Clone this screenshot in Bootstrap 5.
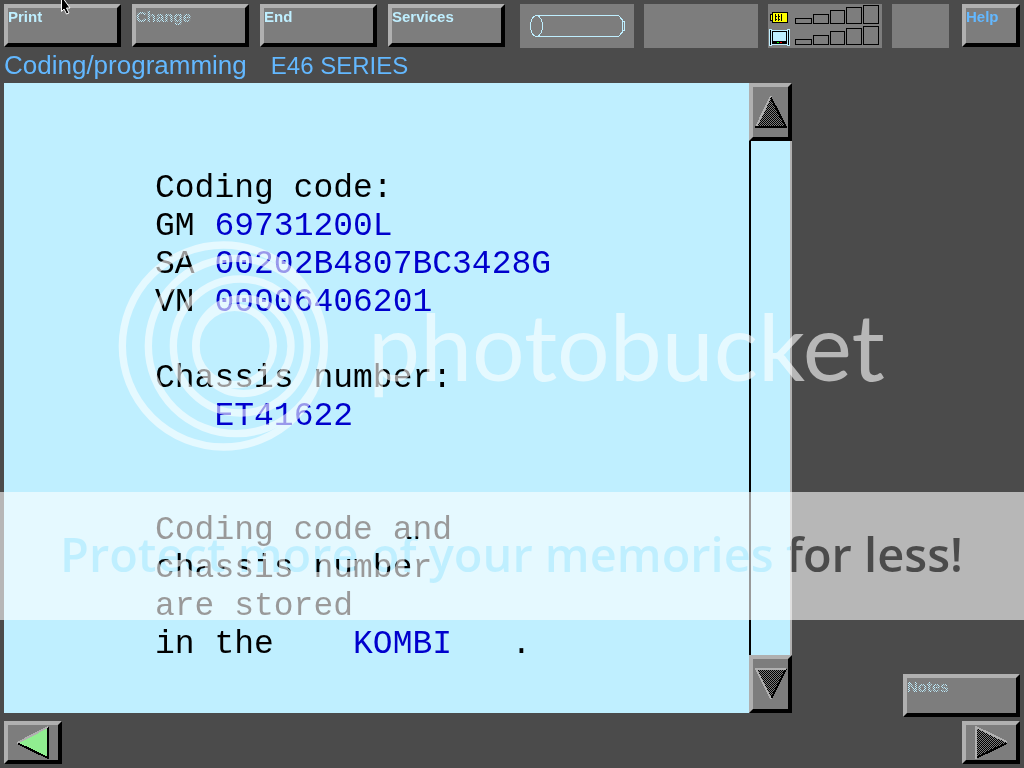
<!DOCTYPE html>
<html lang="en">
<head>
<meta charset="utf-8">
<meta name="viewport" content="width=device-width, initial-scale=1">
<title>Coding/programming</title>
<link href="https://cdn.jsdelivr.net/npm/bootstrap@5.3.0/dist/css/bootstrap.min.css" rel="stylesheet">
<style>
body { background: #4b4b4b; font-family: "Liberation Sans", Arial, sans-serif; padding: 4px; }
.toolbar { gap: 11px; height: 44px; }
.bevel {
  display: flex; align-items: flex-start;
  background: #7d7d7d; border: 4px solid; border-color: #b0b0b0 #000 #000 #b0b0b0; border-radius: 0;
  color: #bfefff; font-size: 15px; font-weight: 700; line-height: 18px; text-align: left; height: 43px; padding: 0;
}
.bevel:active { border-color: #000 #b0b0b0 #b0b0b0 #000; }
.bevel svg { display: block; }
.wide { width: 117px; }
.small-key { width: 58px; }
.help { color: #63b8ff; }
.dim { position: relative; }
.dim::after {
  content: ""; position: absolute; inset: 0;
  background: repeating-conic-gradient(#7d7d7d 0 25%, transparent 0 50%) 0 0 / 2px 2px;
}
.meters { gap: 10px; margin-left: 4px; }
.meter { background: #7d7d7d; width: 114px; }
.meter-short { width: 57px; }
.heading { color: #63b8ff; font-size: 26px; line-height: 35px; font-weight: 400; gap: 24px; }
.series { font-size: 24px; }
.work { gap: 8px; }
.screen { background: #bfefff; color: #000; }
.readout {
  font-family: "Liberation Mono", "Courier New", monospace; font-size: 33px; line-height: 38px;
  padding: 87px 0 49px 151px; white-space: pre; margin: 0; overflow: hidden; flex: 1 1 0; min-width: 0; color: #000;
}
.val { color: #0000cd; }
.scroller { width: 43px; }
.scroller .bevel { width: 43px; height: 58px; }
.track { border-left: 2px solid #000; border-right: 2px solid #b0b0b0; }
.side { width: 228px; gap: 4px; }
.mark-layer { inset: 0; padding-top: 234px; pointer-events: none; mix-blend-mode: screen; overflow: hidden; color: #999; font-family: Lato, sans-serif; }
.mark-row { height: 258px; padding-left: 110px; }
.mark-word { font-size: 93px; line-height: 110px; padding-top: 56px; margin-left: 32px; }
.band { background: #999; color: #000; height: 128px; font-family: "Open Sans", sans-serif; font-size: 47px; line-height: 124px; font-weight: 600; white-space: nowrap; padding-left: 60px; }
.pointer { left: 61px; top: 0; }
</style>
</head>
<body class="min-vh-100 d-flex flex-column position-relative">
<header>
  <nav class="toolbar d-flex" aria-label="Main">
    <button type="button" class="bevel wide">Print</button>
    <button type="button" class="bevel wide dim">Change</button>
    <button type="button" class="bevel wide">End</button>
    <button type="button" class="bevel wide">Services</button>
    <div class="meters d-flex">
      <div class="meter">
        <svg width="114" height="44" fill="none" stroke="#bfefff" shape-rendering="crispEdges"><ellipse cx="16.500" cy="22" rx="6" ry="10.500"/><path d="M16 11.500H98.500L102.500 16V28L98.500 32.500H16M102.500 17.500H104.500V26.500H102.500"/></svg>
      </div>
      <div class="meter"></div>
      <div class="meter">
        <svg width="114" height="44" shape-rendering="crispEdges">
          <g fill="#ff0" stroke="#000"><path d="M2.500 10.500h2v6h-2zM4.500 8.500h15v10h-15z"/><path d="M7.500 10v7M10.500 10v7M13.500 10v7M7 12.500h7M7 15.500h7" stroke-dasharray="2 1"/></g>
          <path fill="#bfefff" d="M1 25h3v1h15v-1h3v17h-3v-1H4v1H1z"/><path fill="none" stroke="#000" d="M2.500 26v15M20.500 26v15M4.500 27.500h14v12h-14z"/><path d="M4 37h15v3H4z"/><path fill="#0f0" d="M9 38h2v1H9z"/><path fill="red" d="M12 38h2v1h-2z"/>
          <path fill="none" stroke="#000" d="M27.500 14.500h16v5h-16zM45.500 10.500h15v9h-15zM62.500 6.500h14v13h-14zM78.500 3.500h15v16h-15zM95.500 1.500h15v18h-15zM27.500 35.500h16v5h-16zM45.500 31.500h15v9h-15zM62.500 27.500h14v13h-14zM78.500 24.500h15v16h-15zM95.500 22.500h15v18h-15z"/>
        </svg>
      </div>
      <div class="meter meter-short"></div>
    </div>
    <button type="button" class="bevel small-key help ms-auto">Help</button>
  </nav>
  <h1 class="heading d-flex align-items-baseline m-0"><span>Coding/programming</span><span class="series">E46 SERIES</span></h1>
</header>
<main class="d-flex flex-grow-1">
  <div class="work d-flex flex-column flex-grow-1">
    <div class="screen d-flex flex-grow-1">
<pre class="readout">Coding code:
GM <span class="val">69731200L</span>
SA <span class="val">00202B4807BC3428G</span>
VN <span class="val">00006406201</span>

Chassis number:
   <span class="val">ET41622</span>


Coding code and
chassis number
are stored
in the    <span class="val">KOMBI</span>   .</pre>
      <div class="scroller d-flex flex-column">
        <button type="button" class="bevel" aria-label="Scroll up">
          <svg width="35" height="50" shape-rendering="crispEdges"><defs><pattern id="dots" width="2" height="2" patternUnits="userSpaceOnUse"><path fill="#7d7d7d" d="M0 0h2v2H0z"/><path d="M0 0h1v1H0zM1 1h1v1H1z"/></pattern></defs><path fill="url(#dots)" d="M18 9L33 40H3z"/><path fill="none" stroke="#b0b0b0" stroke-width="2" d="M18 9L3 40"/><path fill="none" stroke="#000" stroke-width="2" d="M18 11L33 40H2"/></svg>
        </button>
        <div class="track flex-grow-1"></div>
        <button type="button" class="bevel" aria-label="Scroll down">
          <svg width="35" height="50" shape-rendering="crispEdges"><path fill="url(#dots)" d="M18 40L33 10H3z"/><path fill="none" stroke="#000" stroke-width="2" d="M18 40L33 10"/><path fill="none" stroke="#b0b0b0" stroke-width="2" d="M18 40L3 10H33"/></svg>
        </button>
      </div>
    </div>
    <div>
      <button type="button" class="bevel small-key" aria-label="Back">
        <svg width="50" height="35" shape-rendering="crispEdges"><path fill="#90ee90" d="M9 18L40 3V33z"/><path fill="none" stroke="#000" stroke-width="2" d="M9 18L40 33V2"/><path fill="none" stroke="#b0b0b0" stroke-width="2" d="M9 18L40 2"/></svg>
      </button>
    </div>
  </div>
  <aside class="side d-flex flex-column justify-content-end align-items-end">
    <button type="button" class="bevel wide dim">Notes</button>
    <button type="button" class="bevel small-key" aria-label="Forward">
      <svg width="50" height="35" shape-rendering="crispEdges"><path fill="url(#dots)" d="M10 2V33L41 18z"/><path fill="none" stroke="#000" stroke-width="2" d="M10 33L41 18"/><path fill="none" stroke="#b0b0b0" stroke-width="2" d="M10 34V2L41 17"/></svg>
    </button>
  </aside>
</main>
<div class="mark-layer position-absolute">
  <div class="mark-row d-flex">
    <svg class="flex-shrink-0" width="226" height="226" viewBox="0 0 678 678" fill="none" stroke="#999" stroke-width="22"><circle cx="340" cy="336" r="303"/><circle cx="378" cy="336" r="263"/><circle cx="391" cy="336" r="201"/><circle cx="400" cy="336" r="143"/><circle cx="374" cy="336" r="116"/></svg>
    <div class="mark-word">photobucket</div>
  </div>
  <div class="band">Protect more of your memories for less!</div>
</div>
<svg class="pointer position-absolute" width="12" height="16" viewBox="0 0 12 16"><path d="M.5-4V11.500L3 9l2.500 5 2.500-1-2.500-5H9z" stroke="#fff"/></svg>
<script src="https://cdn.jsdelivr.net/npm/bootstrap@5.3.0/dist/js/bootstrap.bundle.min.js"></script>
</body>
</html>
